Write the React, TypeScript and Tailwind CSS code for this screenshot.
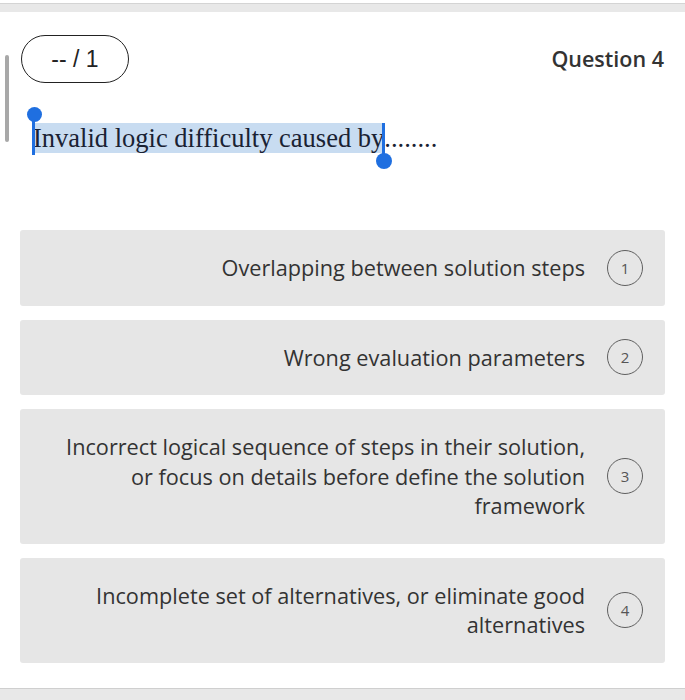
const options = [
  { n: 1, text: "Overlapping between solution steps" },
  { n: 2, text: "Wrong evaluation parameters" },
  {
    n: 3,
    text: "Incorrect logical sequence of steps in their solution, or focus on details before define the solution framework",
  },
  { n: 4, text: "Incomplete set of alternatives, or eliminate good alternatives" },
];

function OptionRow({ n, text }: { n: number; text: string }) {
  return (
    <div className="flex items-center justify-end rounded-[3px] bg-[#e6e6e6] py-[23px] pl-[40px] pr-[22px]">
      <p className="max-w-[528px] text-right text-[21.7px] leading-[29.5px] text-[#333333]">{text}</p>
      <div className="-my-[4px] ml-[22px] flex h-[36px] w-[36px] shrink-0 items-center justify-center rounded-full border-[1.5px] border-[#5f5f5f] text-[15px] text-[#555555]">
        {n}
      </div>
    </div>
  );
}

export default function App() {
  return (
    <div className="flex h-[700px] w-[685px] flex-col bg-white font-['Open_Sans',sans-serif]">
      {/* top strip */}
      <div className="mt-[3px] h-[9px] border-t border-[#d4d4d4] bg-[#e8e8e8]" />

      <div className="relative flex-1">
        {/* scroll indicator */}
        <div className="absolute left-[5px] top-[43px] h-[87px] w-[4px] rounded-full bg-[#a8a8a8]" />

        {/* header */}
        <div className="flex items-center justify-between pl-[21px] pr-[21px] pt-[23px]">
          <div className="flex h-[48px] w-[108px] items-center justify-center rounded-full border-[1.5px] border-[#222222] font-['Liberation_Sans',sans-serif] text-[23px] text-[#222222]">
            -- / 1
          </div>
          <div className="text-[21.5px] font-semibold text-[#333333]">Question 4</div>
        </div>

        {/* question */}
        <p className="mt-[40px] pl-[33px] font-['Liberation_Serif',serif] text-[26.5px] leading-[31px] text-[#1a2233]">
          <span className="relative bg-[#c8dcf1]">
            Invalid logic difficulty caused by
            <span className="absolute left-[-1px] top-[-8px] h-[40px] w-[3px] bg-[#1f6fe0]" />
            <span className="absolute left-[-6px] top-[-16px] h-[15px] w-[15px] rounded-full bg-[#1f6fe0]" />
            <span className="absolute right-[-1px] top-0 h-[36px] w-[3px] bg-[#1f6fe0]" />
            <span className="absolute right-[-8px] top-[30px] h-[16px] w-[16px] rounded-full bg-[#1f6fe0]" />
          </span>
          ........
        </p>

        {/* options */}
        <div className="mt-[76px] flex flex-col gap-[14px] px-[20px]">
          {options.map((o) => (
            <OptionRow key={o.n} n={o.n} text={o.text} />
          ))}
        </div>
      </div>

      {/* bottom strip */}
      <div className="h-[12px] border-t border-[#cfcfcf] bg-[#e8e8e8]" />
    </div>
  );
}
